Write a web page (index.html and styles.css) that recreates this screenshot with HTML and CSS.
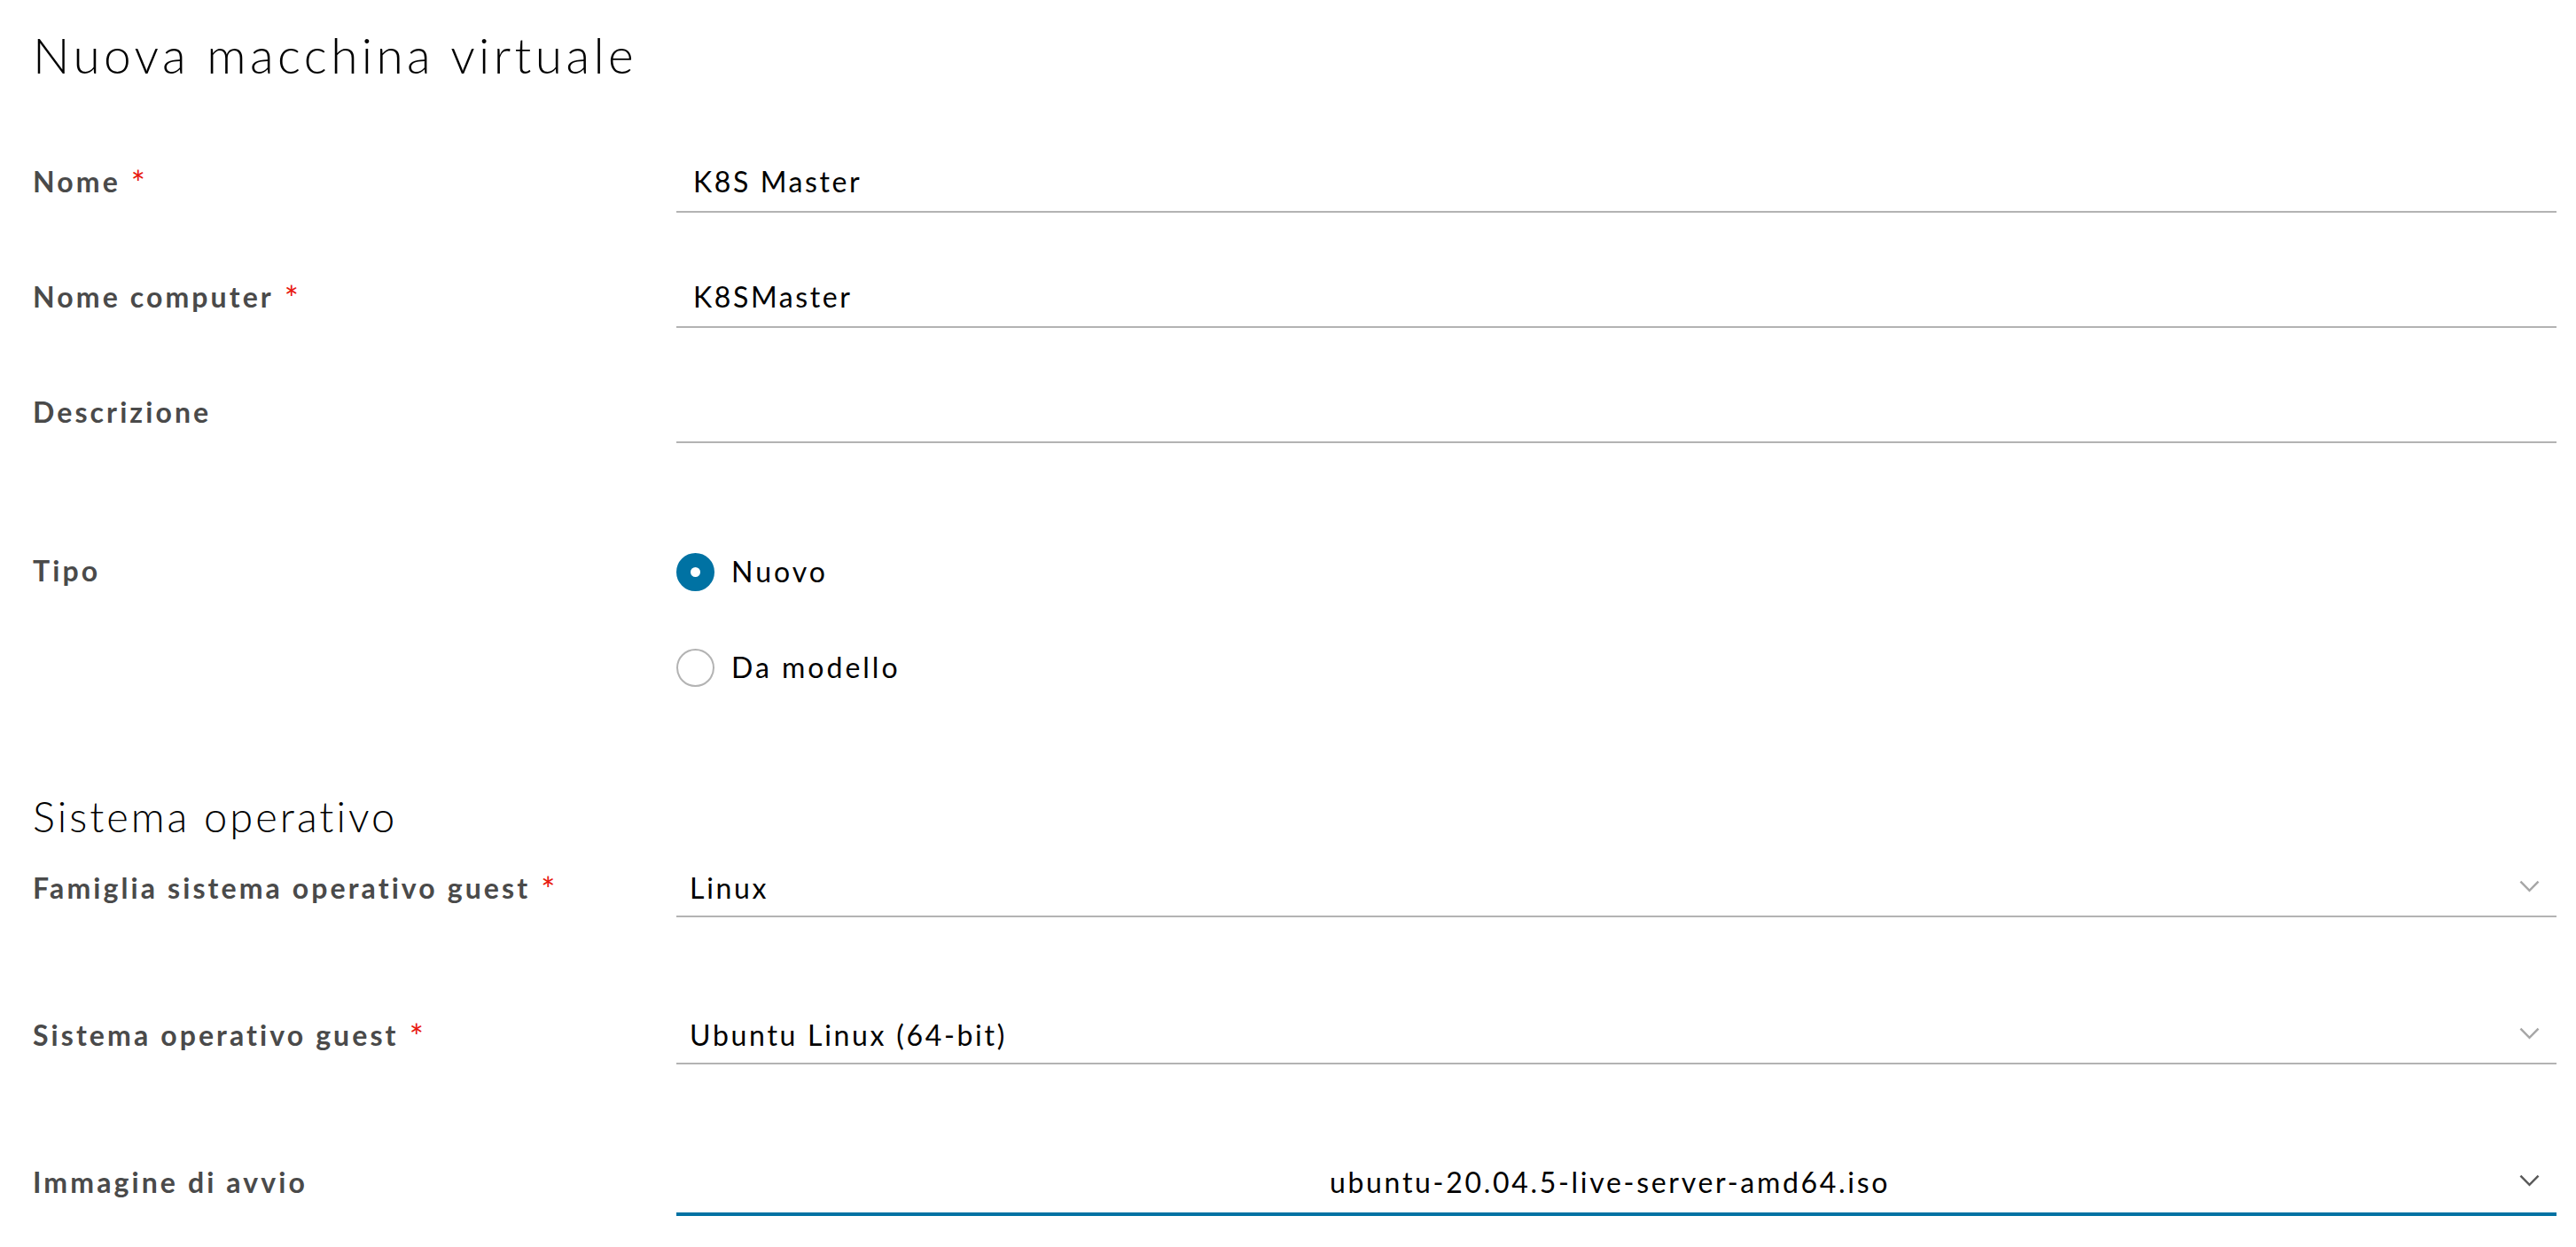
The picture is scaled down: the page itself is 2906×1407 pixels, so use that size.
FILE: index.html
```html
<!DOCTYPE html>
<html lang="it">
<head>
<meta charset="utf-8">
<title>Nuova macchina virtuale</title>
<link rel="stylesheet" href="styles.css">
</head>
<body>
<main class="page">
  <h1 class="title">Nuova macchina virtuale</h1>

  <div class="form form-general">
    <div class="row">
      <div class="lbl">Nome<span class="req">*</span></div>
      <div class="input">K8S Master</div>
    </div>
    <div class="row">
      <div class="lbl">Nome computer<span class="req">*</span></div>
      <div class="input">K8SMaster</div>
    </div>
    <div class="row">
      <div class="lbl">Descrizione</div>
      <div class="input"></div>
    </div>
    <div class="row row-tipo">
      <div class="lbl lbl-tipo">Tipo</div>
      <div class="radios">
        <div class="radio checked"><span class="circle"></span><span class="radio-text">Nuovo</span></div>
        <div class="radio"><span class="circle"></span><span class="radio-text">Da modello</span></div>
      </div>
    </div>
  </div>

  <h2 class="section">Sistema operativo</h2>

  <div class="form form-os">
    <div class="row">
      <div class="lbl lbl-os">Famiglia sistema operativo guest<span class="req">*</span></div>
      <div class="select">Linux<svg class="chev" viewBox="0 0 24 14"><path d="M1.5 1.5 L12 12 L22.5 1.5"/></svg></div>
    </div>
    <div class="row">
      <div class="lbl lbl-os">Sistema operativo guest<span class="req">*</span></div>
      <div class="select">Ubuntu Linux (64-bit)<svg class="chev" viewBox="0 0 24 14"><path d="M1.5 1.5 L12 12 L22.5 1.5"/></svg></div>
    </div>
    <div class="row">
      <div class="lbl lbl-os">Immagine di avvio</div>
      <div class="select select-focus"><span class="center-text">ubuntu-20.04.5-live-server-amd64.iso</span><svg class="chev chev-dark" viewBox="0 0 24 14"><path d="M1.5 1.5 L12 12 L22.5 1.5"/></svg></div>
    </div>
  </div>
</main>
</body>
</html>
```
FILE: styles.css
```css
html, body {
  margin: 0;
  padding: 0;
  background: #ffffff;
}

body {
  font-family: Lato, "Open Sans", "Liberation Sans", sans-serif;
  color: #000000;
}

.page {
  padding: 0 22px 0 37px;
}

.title {
  margin: 29px 0 0 0;
  font-size: 55px;
  line-height: 66px;
  font-weight: 300;
  letter-spacing: 4.4px;
  color: #000000;
}

.form {
  display: flex;
  flex-direction: column;
}

.form-general {
  margin-top: 90px;
  gap: 75px;
}

.form-os {
  margin-top: 31px;
  gap: 111px;
}

.row {
  display: grid;
  grid-template-columns: 726px 1fr;
  align-items: start;
}

.row-tipo {
  margin-top: 48px;
}

.lbl {
  font-size: 32px;
  line-height: 40px;
  font-weight: 700;
  letter-spacing: 3.1px;
  color: #4a4a4a;
  white-space: nowrap;
}

.lbl-os {
  padding-top: 2px;
}

.lbl-tipo {
  line-height: 42px;
}

.req {
  color: #e8170d;
  font-weight: 400;
  font-size: 38px;
  line-height: 0;
  letter-spacing: 0;
  margin-left: 12px;
  position: relative;
  top: 4px;
}

.input {
  height: 40px;
  padding: 0 0 13px 19px;
  font-size: 32px;
  line-height: 40px;
  letter-spacing: 2.6px;
  color: #000000;
  border-bottom: 2px solid #b3b3b3;
}

.radios {
  display: flex;
  flex-direction: column;
  gap: 64px;
}

.radio {
  display: flex;
  align-items: center;
  height: 44px;
  gap: 19px;
}

.circle {
  box-sizing: border-box;
  width: 43px;
  height: 43px;
  border-radius: 50%;
  border: 2px solid #b3b3b3;
  background: #ffffff;
  flex: none;
}

.radio.checked .circle {
  border: 16px solid #0072a3;
  background: #ffffff;
}

.radio-text {
  font-size: 32px;
  line-height: 40px;
  letter-spacing: 3px;
  color: #000000;
}

.section {
  margin: 118px 0 0 0;
  font-size: 47px;
  line-height: 56px;
  font-weight: 300;
  letter-spacing: 3px;
  color: #000000;
}

.select {
  position: relative;
  height: 40px;
  padding: 2px 60px 11px 15px;
  font-size: 32px;
  line-height: 40px;
  letter-spacing: 2.7px;
  color: #000000;
  border-bottom: 2px solid #b3b3b3;
}

.select-focus {
  padding-bottom: 14px;
  border-bottom: 4px solid #0072a3;
  text-align: center;
}

.center-text {
  display: inline-block;
  margin-left: 30px;
}

.chev {
  position: absolute;
  right: 19px;
  top: 13px;
  width: 23px;
  height: 14px;
  fill: none;
  stroke: #a6a6a6;
  stroke-width: 2.6;
}

.chev-dark {
  stroke: #595959;
}
```
